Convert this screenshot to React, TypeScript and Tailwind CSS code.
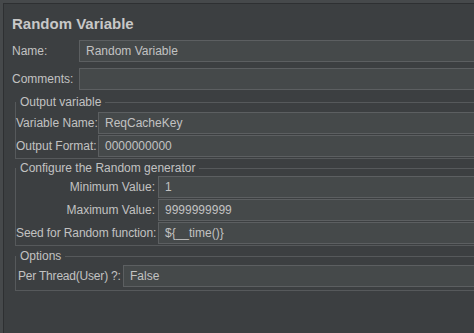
import React from "react";

const font = { fontFamily: '"Liberation Sans", Arial, sans-serif' };

function Field({ value }: { value?: string }) {
  return (
    <div className="flex-1 h-[22px] flex items-center pl-[6px] bg-[#45494a] border border-[#5c5f61] text-[12px] text-[#c2c2c2]">
      {value}
    </div>
  );
}

function Row({ label, value, labelClass }: { label: string; value?: string; labelClass: string }) {
  return (
    <div className="flex items-center">
      <div className={`${labelClass} shrink-0 text-[12px] text-[#c2c2c2] whitespace-nowrap`}>{label}</div>
      <Field value={value} />
    </div>
  );
}

function Group({ title, children, className }: { title: string; children: React.ReactNode; className?: string }) {
  return (
    <fieldset className={`ml-[3px] border border-[#56595b] ${className ?? ""}`}>
      <legend className="px-[4px] text-[12px] leading-[16px] text-[#c2c2c2]">{title}</legend>
      {children}
    </fieldset>
  );
}

export default function App() {
  return (
    <div className="w-[474px] h-[333px] overflow-hidden bg-[#46494b] pt-[3px] pl-[3px]" style={font}>
      <div className="w-[560px] h-[340px] border-t border-l border-[#2e3032] bg-[#3c3f41] pl-[8px]">
        <div className="mt-[10px] text-[15px] leading-[20px] font-bold text-[#c8c8c8]">Random Variable</div>
        <div className="mt-[6px] flex flex-col gap-[6px]">
          <Row label="Name:" value="Random Variable" labelClass="w-[67px]" />
          <Row label="Comments:" labelClass="w-[67px]" />
        </div>
        <Group title="Output variable" className="mt-[4px] pt-[2px] pb-[1px]">
          <div className="flex flex-col gap-[1px]">
            <Row label="Variable Name:" value="ReqCacheKey" labelClass="w-[82px] text-right pr-[3px]" />
            <Row label="Output Format:" value="0000000000" labelClass="w-[82px] text-right pr-[3px]" />
          </div>
        </Group>
        <Group title="Configure the Random generator" className="mt-[1px] pb-[1px]">
          <div className="flex flex-col gap-[1px]">
            <Row label="Minimum Value:" value="1" labelClass="w-[142px] text-right pr-[3px]" />
            <Row label="Maximum Value:" value="9999999999" labelClass="w-[142px] text-right pr-[3px]" />
            <Row label="Seed for Random function:" value="${__time()}" labelClass="w-[142px] text-right pr-[3px] tracking-[-0.1px]" />
          </div>
        </Group>
        <Group title="Options" className="mt-[2px] pt-[1px] pb-[3px]">
          <Row label="Per Thread(User) ?:" value="False" labelClass="w-[107px] pl-[2px] tracking-[-0.2px]" />
        </Group>
      </div>
    </div>
  );
}
